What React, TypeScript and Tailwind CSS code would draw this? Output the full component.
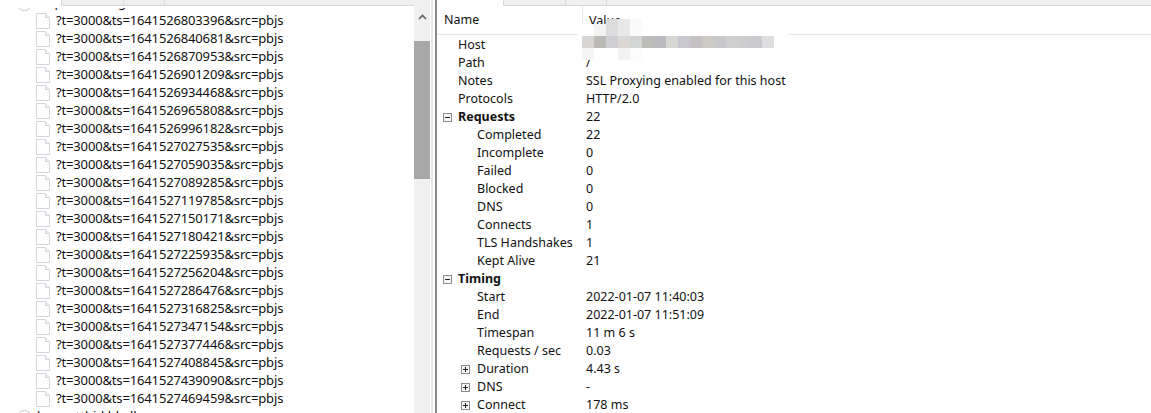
const font = { fontFamily: '"Noto Sans", sans-serif' };

const stamps = [
  "1641526803396", "1641526840681", "1641526870953", "1641526901209", "1641526934468", "1641526965808",
  "1641526996182", "1641527027535", "1641527059035", "1641527089285", "1641527119785", "1641527150171",
  "1641527180421", "1641527225935", "1641527256204", "1641527286476", "1641527316825", "1641527347154",
  "1641527377446", "1641527408845", "1641527439090", "1641527469459",
];

type Row = { label: string; value?: string; level: 0 | 1; bold?: boolean; box?: "minus" | "plus" };

const rows: Row[] = [
  { label: "Host", level: 0 },
  { label: "Path", value: "/", level: 0 },
  { label: "Notes", value: "SSL Proxying enabled for this host", level: 0 },
  { label: "Protocols", value: "HTTP/2.0", level: 0 },
  { label: "Requests", value: "22", level: 0, bold: true, box: "minus" },
  { label: "Completed", value: "22", level: 1 },
  { label: "Incomplete", value: "0", level: 1 },
  { label: "Failed", value: "0", level: 1 },
  { label: "Blocked", value: "0", level: 1 },
  { label: "DNS", value: "0", level: 1 },
  { label: "Connects", value: "1", level: 1 },
  { label: "TLS Handshakes", value: "1", level: 1 },
  { label: "Kept Alive", value: "21", level: 1 },
  { label: "Timing", level: 0, bold: true, box: "minus" },
  { label: "Start", value: "2022-01-07 11:40:03", level: 1 },
  { label: "End", value: "2022-01-07 11:51:09", level: 1 },
  { label: "Timespan", value: "11 m 6 s", level: 1 },
  { label: "Requests / sec", value: "0.03", level: 1 },
  { label: "Duration", value: "4.43 s", level: 1, box: "plus" },
  { label: "DNS", value: "-", level: 1, box: "plus" },
  { label: "Connect", value: "178 ms", level: 1, box: "plus" },
];

const blur = ["#d8d6d4", "#bdbbb8", "#cfced2", "#dcd8d5", "#d2d5d4", "#bebcb9", "#bab9bd", "#d8d6d3", "#c9c8d0", "#c6c1c2", "#cdcac6", "#c8c7cc", "#cfcfcf", "#cdcdcf", "#cbcbcf", "#dfdfe2"];

function FileIcon() {
  return (
    <svg viewBox="0 0 14 16" className="h-4 w-[14px] shrink-0" fill="none">
      <path d="M0.5 0.5H9.5L13.5 4.5V15.5H0.5Z" fill="#fff" stroke="#d3d6dc" />
      <path d="M9.5 0.5V4.5H13.5" fill="#f1f2f4" stroke="#d3d6dc" />
    </svg>
  );
}

function Box({ type }: { type: "minus" | "plus" }) {
  return (
    <svg viewBox="0 0 9 9" className="h-[9px] w-[9px] shrink-0" fill="none">
      <rect x="0.5" y="0.5" width="8" height="8" fill="#f6f6f6" stroke="#8c8c8c" />
      <path d="M2 4.5H7" stroke="#222" />
      {type === "plus" && <path d="M4.5 2V7" stroke="#222" />}
    </svg>
  );
}

function Globe() {
  return (
    <svg viewBox="0 0 15 15" className="ml-[2px] h-[15px] w-[15px] shrink-0" fill="none">
      <circle cx="7.5" cy="7.5" r="7" fill="#fff" stroke="#c4c6cb" />
      <path d="M7.5 3V11" stroke="#6d8fb8" />
    </svg>
  );
}

function HostRow({ label, box }: { label: string; box?: boolean }) {
  return (
    <div className="flex h-[18px] items-center">
      <div className="flex w-[15px] justify-center pr-[4px]">{box && <Box type="minus" />}</div>
      <Globe />
      <span className="ml-[5px] whitespace-nowrap text-[13px] text-[#111]">{label}</span>
    </div>
  );
}

function SessionTree() {
  return (
    <div className="mt-[2px] min-h-0 flex-1 overflow-hidden">
      <div className="-mt-[14px]">
        <HostRow label="https://ads.log.net" />
        {stamps.map((s) => (
          <div key={s} className="flex h-[18px] items-center pl-[36px]">
            <FileIcon />
            <span className="ml-[6px] whitespace-nowrap text-[13px] tracking-[-0.15px] text-[#111]">
              ?t=3000&ts={s}&src=pbjs
            </span>
          </div>
        ))}
        <HostRow label="bases.ttbid.bl.all" box />
      </div>
    </div>
  );
}

function Scrollbar() {
  return (
    <div className="flex w-[16px] shrink-0 flex-col bg-[#f0f0f0]">
      <div className="flex h-[41px] justify-center pt-[14px]">
        <svg viewBox="0 0 9 6" className="h-[6px] w-[9px]" fill="none">
          <path d="M1 5L4.5 1.5L8 5" stroke="#606060" strokeWidth="1.6" />
        </svg>
      </div>
      <div className="h-[138px] bg-[#a8a8a8]" />
    </div>
  );
}

function TabStrip({ offset, first, second }: { offset: string; first: string; second: string }) {
  return (
    <div className="flex h-[6px] shrink-0 overflow-hidden">
      <div className={`shrink-0 ${offset}`} />
      <div className={`h-[6px] shrink-0 border-r border-b border-l border-[#d9d9d9] bg-[#f0f0f0] ${first}`} />
      <div className={`h-[6px] shrink-0 border-r border-b border-[#d9d9d9] bg-[#f0f0f0] ${second}`} />
      <div className="h-[6px] flex-1 border-b border-[#d9d9d9] bg-[#f0f0f0]" />
    </div>
  );
}

function MaskedHost() {
  return (
    <div className="pointer-events-none absolute top-[19px] left-[145px] flex flex-col">
      <div className="absolute top-[5px] -left-[4px] h-[12px] w-[210px] bg-white/90" />
      <div className="relative ml-[12px] flex h-[17px]">
        <div className="mt-[5px] w-[12px] bg-[#f3f3f3]" />
        <div className="w-[12px] bg-[#dcdcdc]" />
        <div className="w-[12px] bg-[#e8e8e8]" />
        <div className="w-[12px] bg-[#fafafa]" />
      </div>
      <div className="relative flex h-[12px]">
        {blur.map((c, i) => (
          <div key={i} className="w-[12px]" style={{ background: c }} />
        ))}
      </div>
      <div className="relative flex h-[12px] w-[192px] bg-white">
        <div className="w-[12px] bg-[#f5f5f5]" />
        <div className="w-[24px]" />
        <div className="w-[12px] bg-[#f2f2f2]" />
        <div className="w-[12px] bg-[#fbfbfb]" />
      </div>
    </div>
  );
}

function Inspector() {
  return (
    <div className="relative flex min-w-0 flex-1 flex-col">
      <TabStrip offset="w-[66px]" first="w-[63px]" second="w-[41px]" />
      <div className="flex h-[29px] shrink-0 items-center border-b border-[#e8e8e8] text-[12.5px] text-[#111]">
        <div className="w-[145px] pl-[7px]">Name</div>
        <div className="h-full border-l border-[#e8e8e8] pl-[6px] leading-[29px]">Value</div>
      </div>
      <div className="pt-[1px]">
        {rows.map((r, i) => (
          <div key={i} className="flex h-[18px] items-center text-[12.5px] text-[#111]">
            <div className="flex w-[149px] shrink-0 items-center">
              {r.level === 1 ? (
                <>
                  <div className="flex w-[40px] shrink-0 justify-end pr-[7px]">{r.box && <Box type={r.box} />}</div>
                  <span className="whitespace-nowrap">{r.label}</span>
                </>
              ) : (
                <>
                  <div className="flex w-[21px] shrink-0 justify-end pr-[6px]">{r.box && <Box type={r.box} />}</div>
                  <span className={r.bold ? "font-bold" : ""}>{r.label}</span>
                </>
              )}
            </div>
            <span className="whitespace-nowrap">{r.value}</span>
          </div>
        ))}
      </div>
      <MaskedHost />
    </div>
  );
}

export default function App() {
  return (
    <div className="flex h-[413px] w-[1151px] overflow-hidden bg-white" style={font}>
      <div className="flex w-[430px] shrink-0 overflow-hidden">
        <div className="flex min-w-0 flex-1 flex-col">
          <TabStrip offset="w-[61px]" first="w-[63px]" second="w-[41px]" />
          <SessionTree />
        </div>
        <Scrollbar />
      </div>
      <div className="flex w-[7px] shrink-0 bg-white">
        <div className="ml-[1px] w-[2px] bg-[#e8e8e8]" />
        <div className="ml-[2px] w-[2px] bg-[#8a8a8a]" />
      </div>
      <Inspector />
    </div>
  );
}
